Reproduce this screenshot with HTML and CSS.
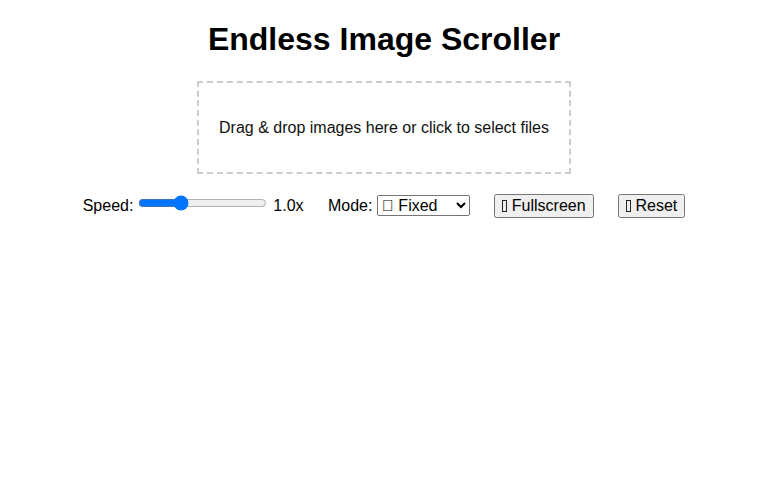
FILE: index.html
```html
<!DOCTYPE html>
<html lang="en">
<head>
  <meta charset="UTF-8" />
  <meta name="viewport" content="width=device-width, initial-scale=1.0"/>
  <title>Endless Image Scroller</title>
  <link rel="stylesheet" href="styles.css">
</head>
<body>
  <h1>Endless Image Scroller</h1>

  <div class="drop-zone" id="dropZone">
    Drag &amp; drop images here or click to select files
  </div>

  <div class="controls">
    <label class="group">Speed: <input type="range" min="0.1" max="3" step="0.1" value="1" id="speed"> <span id="speedValue">1.0x</span></label>
    <label class="group">Mode: <select id="mode">
        <option>&#xE001; Fixed</option>
        <option>&#xE002; Loop</option>
        <option>&#xE003; Random</option>
      </select></label>
    <button class="group" id="fullscreen"><span class="glyph"></span> Fullscreen</button>
    <button class="group" id="reset"><span class="glyph"></span> Reset</button>
  </div>
</body>
</html>
```

FILE: styles.css
```css
body {
  margin: 0;
  font-family: "Liberation Sans", Arial, sans-serif;
  background: #fff;
  color: #000;
  text-align: center;
}

h1 {
  font-size: 32px;
  margin: 21px 0 23px;
}

.drop-zone {
  display: inline-block;
  border: 2px dashed #ccc;
  padding: 35.5px 20px;
  font-size: 16px;
  color: #111;
}

.controls {
  margin-top: 19px;
  font-size: 16px;
}

.group {
  margin: 0 10px;
}

input[type="range"] {
  margin-left: 0;
}

select, button {
  font-family: "Liberation Sans", Arial, sans-serif;
  font-size: 16px;
}

select {
  width: 93px;
}

/* missing-emoji box */
.glyph {
  display: inline-block;
  width: 3px;
  height: 10px;
  border: 1px solid #222;
  vertical-align: -1px;
}
```
